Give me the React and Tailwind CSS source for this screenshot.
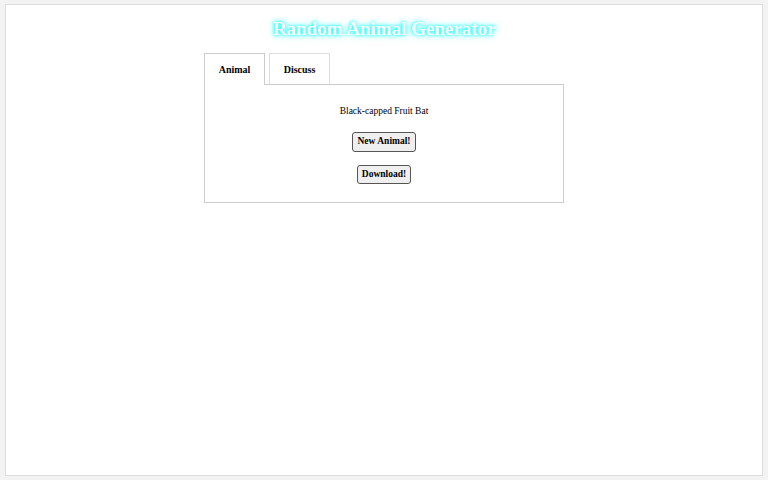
export default function App() {
  return (
    <div className="w-[768px] h-[480px] bg-[#f3f3f3] pt-[4px] pl-[5px]" style={{ fontFamily: '"Liberation Serif", "Times New Roman", serif' }}>
      <div className="w-[758px] h-[472px] bg-white border border-[#dcdcdc] flex flex-col items-center">
        <h1
          className="mt-[12px] text-[19px] leading-[24px] font-bold text-white"
          style={{ textShadow: '0 0 3px #00ffff, 0 0 6px #00ffff' }}
        >
          Random Animal Generator
        </h1>
        <div className="mt-[12px] w-[360px] flex flex-col">
          <div className="flex gap-[4px] items-end">
            <div className="w-[61px] h-[32px] border border-b-0 border-[#cccccc] bg-white flex items-center justify-center text-[10px] font-bold text-black relative z-10 -mb-[1px]">
              Animal
            </div>
            <div className="w-[61px] h-[31px] border border-b-0 border-[#dddddd] bg-white flex items-center justify-center text-[10px] font-bold text-black">
              Discuss
            </div>
          </div>
          <div className="border border-[#cccccc] h-[119px] flex flex-col items-center">
            <div className="mt-[20px] text-[9.5px] leading-[12px] text-black">Black-capped Fruit Bat</div>
            <button className="mt-[15px] h-[20px] px-[4px] text-[9.5px] font-bold text-black bg-[#efefef] border border-[#555] rounded-[3px] leading-none">
              New Animal!
            </button>
            <button className="mt-[13px] h-[19px] px-[4px] text-[9.5px] font-bold text-black bg-[#efefef] border border-[#555] rounded-[3px] leading-none">
              Download!
            </button>
          </div>
        </div>
      </div>
    </div>
  );
}
